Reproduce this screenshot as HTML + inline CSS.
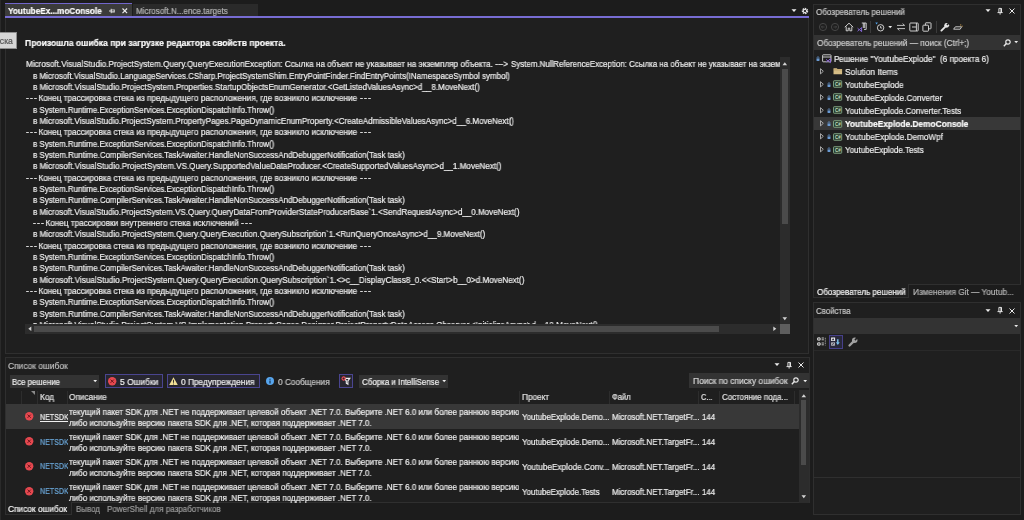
<!DOCTYPE html>
<html lang="ru">
<head>
<meta charset="utf-8">
<title>Visual Studio</title>
<style>
html,body{margin:0;padding:0;}
body{width:1024px;height:520px;overflow:hidden;background:#1c1c1c;position:relative;font-family:"Liberation Sans",sans-serif;}
.c{position:absolute;overflow:hidden;box-sizing:border-box;}
.t{position:absolute;white-space:pre;transform-origin:0 50%;will-change:transform;-webkit-text-stroke:0.2px currentColor;}
.r{position:absolute;display:block;box-sizing:border-box;}
.s{position:absolute;overflow:visible;}
</style>
</head>
<body>
<div class="c" id="edge" style="left:0.00px;top:0.00px;width:1.30px;height:520.00px;background:#2a2a2a;">
</div>
<div class="c" id="tabs" style="left:0.00px;top:0.00px;width:812.00px;height:19.00px;z-index:2;">
 <i class="r" style="left:5.00px;top:3.00px;width:127.00px;height:14.00px;background:#3b3b3b;border-top:1px solid #7166cc;"></i>
 <i class="r" style="left:133.00px;top:4.00px;width:125.00px;height:12.20px;background:#2a2a2a;"></i>
 <i class="r" style="left:5.00px;top:16.30px;width:804.00px;height:1.80px;background:#776cd2;"></i>
 <span id="t0" class="t" style="left:7.80px;top:6.90px;font-size:8.8px;line-height:8.8px;color:#ffffff;font-weight:bold;transform:scaleX(0.9320);">YoutubeEx...moConsole</span>
 <span id="t1" class="t" style="left:135.70px;top:6.90px;font-size:8.8px;line-height:8.8px;color:#b6b6b6;transform:scaleX(0.9159);">Microsoft.N...ence.targets</span>
 <svg class="s" style="left:108.00px;top:6.70px" width="8" height="8" viewBox="0 0 8 8"><path d="M1 4h2.2M3.2 1.8v4.4" fill="none" stroke="#e0e0e0" stroke-width="1"/><path d="M3.2 2.5h3.6v3H3.2z" fill="#d8d8d8"/><rect x="4.2" y="3.2" width="1.4" height="1.2" fill="#3b3b3b"/></svg>
 <svg class="s" style="left:122.40px;top:7.60px" width="5.6" height="5.6" viewBox="0 0 5.6 5.6"><path d="M0.5 0.5l4.6 4.6M5.1 0.5l-4.6 4.6" fill="none" stroke="#f0f0f0" stroke-width="1.1"/></svg>
 <svg class="s" style="left:791.30px;top:9.20px" width="6" height="4" viewBox="0 0 6 4"><path d="M0.5 0.2h5l-2.5 2.9z" fill="#ececec"/></svg>
 <svg class="s" style="left:801.00px;top:6.60px" width="8" height="8" viewBox="0 0 8 8"><circle cx="4" cy="4" r="2.3" fill="none" stroke="#e0e0e0" stroke-width="1.8" stroke-dasharray="1.3 0.6"/><circle cx="4" cy="4" r="1.6" fill="none" stroke="#e0e0e0" stroke-width="1"/></svg>
</div>
<div class="c" id="doc" style="left:5.00px;top:17.00px;width:804.00px;height:337.00px;background:#1f1f1f;box-shadow:inset 0 0 0 1px #2f2f2f;">
 <span id="t2" class="t" style="left:19.60px;top:22.09px;font-size:9px;line-height:9px;color:#ffffff;font-weight:bold;transform:scaleX(0.9515);">Произошла ошибка при загрузке редактора свойств проекта.</span>
 <div class="c" id="txt" style="left:20.00px;top:40.00px;width:755.00px;height:267.00px;">
  <span id="t3" class="t" style="left:485.50px;top:3.37px;font-size:8.6px;line-height:8.6px;color:#efefef;transform:scaleX(0.9224);"><span id="p3">System.NullReferenceException: Ссылка на объект не указывает на экзем</span>пляр объекта.</span>
  <span id="t4" class="t" style="left:1.20px;top:3.37px;font-size:8.6px;line-height:8.6px;color:#efefef;transform:scaleX(0.9453);">Microsoft.VisualStudio.ProjectSystem.Query.QueryExecutionException: Ссылка на объект не указывает на экземпляр объекта. ---&gt; </span>
  <span id="t5" class="t" style="left:8.20px;top:14.70px;font-size:8.6px;line-height:8.6px;color:#efefef;transform:scaleX(0.9250);">в Microsoft.VisualStudio.LanguageServices.CSharp.ProjectSystemShim.EntryPointFinder.FindEntryPoints(INamespaceSymbol symbol)</span>
  <span id="t6" class="t" style="left:8.20px;top:26.03px;font-size:8.6px;line-height:8.6px;color:#efefef;transform:scaleX(0.9402);">в Microsoft.VisualStudio.ProjectSystem.Properties.StartupObjectsEnumGenerator.&lt;GetListedValuesAsync&gt;d__8.MoveNext()</span>
  <span id="t7" class="t" style="left:0.90px;top:37.36px;font-size:8.6px;line-height:8.6px;color:#efefef;transform:scaleX(1.0264);letter-spacing:1px;">---</span>
  <span id="t8" class="t" style="left:11.20px;top:37.36px;font-size:8.6px;line-height:8.6px;color:#efefef;transform:scaleX(0.9542);"><span id="p8"> Конец трассировка стека из предыдущего расположения, где возникло исключение</span> </span>
  <span id="t9" class="t" style="left:335.10px;top:37.36px;font-size:8.6px;line-height:8.6px;color:#efefef;transform:scaleX(1.0350);letter-spacing:1px;">---</span>
  <span id="t10" class="t" style="left:8.20px;top:48.69px;font-size:8.6px;line-height:8.6px;color:#efefef;transform:scaleX(0.9176);">в System.Runtime.ExceptionServices.ExceptionDispatchInfo.Throw()</span>
  <span id="t11" class="t" style="left:8.20px;top:60.02px;font-size:8.6px;line-height:8.6px;color:#efefef;transform:scaleX(0.9363);">в Microsoft.VisualStudio.ProjectSystem.PropertyPages.PageDynamicEnumProperty.&lt;CreateAdmissibleValuesAsync&gt;d__6.MoveNext()</span>
  <span id="t12" class="t" style="left:0.90px;top:71.35px;font-size:8.6px;line-height:8.6px;color:#efefef;transform:scaleX(1.0264);letter-spacing:1px;">---</span>
  <span id="t13" class="t" style="left:11.20px;top:71.35px;font-size:8.6px;line-height:8.6px;color:#efefef;transform:scaleX(0.9542);"><span id="p13"> Конец трассировка стека из предыдущего расположения, где возникло исключение</span> </span>
  <span id="t14" class="t" style="left:335.10px;top:71.35px;font-size:8.6px;line-height:8.6px;color:#efefef;transform:scaleX(1.0350);letter-spacing:1px;">---</span>
  <span id="t15" class="t" style="left:8.20px;top:82.68px;font-size:8.6px;line-height:8.6px;color:#efefef;transform:scaleX(0.9176);">в System.Runtime.ExceptionServices.ExceptionDispatchInfo.Throw()</span>
  <span id="t16" class="t" style="left:8.20px;top:94.01px;font-size:8.6px;line-height:8.6px;color:#efefef;transform:scaleX(0.9231);">в System.Runtime.CompilerServices.TaskAwaiter.HandleNonSuccessAndDebuggerNotification(Task task)</span>
  <span id="t17" class="t" style="left:8.20px;top:105.34px;font-size:8.6px;line-height:8.6px;color:#efefef;transform:scaleX(0.9419);">в Microsoft.VisualStudio.ProjectSystem.VS.Query.SupportedValueDataProducer.&lt;CreateSupportedValuesAsync&gt;d__1.MoveNext()</span>
  <span id="t18" class="t" style="left:0.90px;top:116.67px;font-size:8.6px;line-height:8.6px;color:#efefef;transform:scaleX(1.0264);letter-spacing:1px;">---</span>
  <span id="t19" class="t" style="left:11.20px;top:116.67px;font-size:8.6px;line-height:8.6px;color:#efefef;transform:scaleX(0.9542);"><span id="p19"> Конец трассировка стека из предыдущего расположения, где возникло исключение</span> </span>
  <span id="t20" class="t" style="left:335.10px;top:116.67px;font-size:8.6px;line-height:8.6px;color:#efefef;transform:scaleX(1.0350);letter-spacing:1px;">---</span>
  <span id="t21" class="t" style="left:8.20px;top:128.00px;font-size:8.6px;line-height:8.6px;color:#efefef;transform:scaleX(0.9176);">в System.Runtime.ExceptionServices.ExceptionDispatchInfo.Throw()</span>
  <span id="t22" class="t" style="left:8.20px;top:139.33px;font-size:8.6px;line-height:8.6px;color:#efefef;transform:scaleX(0.9231);">в System.Runtime.CompilerServices.TaskAwaiter.HandleNonSuccessAndDebuggerNotification(Task task)</span>
  <span id="t23" class="t" style="left:8.20px;top:150.66px;font-size:8.6px;line-height:8.6px;color:#efefef;transform:scaleX(0.9345);">в Microsoft.VisualStudio.ProjectSystem.VS.Query.QueryDataFromProviderStateProducerBase`1.&lt;SendRequestAsync&gt;d__0.MoveNext()</span>
  <span id="t24" class="t" style="left:7.90px;top:161.99px;font-size:8.6px;line-height:8.6px;color:#efefef;transform:scaleX(1.0264);letter-spacing:1px;">---</span>
  <span id="t25" class="t" style="left:18.20px;top:161.99px;font-size:8.6px;line-height:8.6px;color:#efefef;transform:scaleX(0.9578);"><span id="p25"> Конец трассировки внутреннего стека исключений</span> </span>
  <span id="t26" class="t" style="left:216.30px;top:161.99px;font-size:8.6px;line-height:8.6px;color:#efefef;transform:scaleX(1.0350);letter-spacing:1px;">---</span>
  <span id="t27" class="t" style="left:8.20px;top:173.32px;font-size:8.6px;line-height:8.6px;color:#efefef;transform:scaleX(0.9414);">в Microsoft.VisualStudio.ProjectSystem.Query.QueryExecution.QuerySubscription`1.&lt;RunQueryOnceAsync&gt;d__9.MoveNext()</span>
  <span id="t28" class="t" style="left:0.90px;top:184.65px;font-size:8.6px;line-height:8.6px;color:#efefef;transform:scaleX(1.0264);letter-spacing:1px;">---</span>
  <span id="t29" class="t" style="left:11.20px;top:184.65px;font-size:8.6px;line-height:8.6px;color:#efefef;transform:scaleX(0.9542);"><span id="p29"> Конец трассировка стека из предыдущего расположения, где возникло исключение</span> </span>
  <span id="t30" class="t" style="left:335.10px;top:184.65px;font-size:8.6px;line-height:8.6px;color:#efefef;transform:scaleX(1.0350);letter-spacing:1px;">---</span>
  <span id="t31" class="t" style="left:8.20px;top:195.98px;font-size:8.6px;line-height:8.6px;color:#efefef;transform:scaleX(0.9176);">в System.Runtime.ExceptionServices.ExceptionDispatchInfo.Throw()</span>
  <span id="t32" class="t" style="left:8.20px;top:207.31px;font-size:8.6px;line-height:8.6px;color:#efefef;transform:scaleX(0.9231);">в System.Runtime.CompilerServices.TaskAwaiter.HandleNonSuccessAndDebuggerNotification(Task task)</span>
  <span id="t33" class="t" style="left:8.20px;top:218.64px;font-size:8.6px;line-height:8.6px;color:#efefef;transform:scaleX(0.9439);">в Microsoft.VisualStudio.ProjectSystem.Query.QueryExecution.QuerySubscription`1.&lt;&gt;c__DisplayClass8_0.&lt;&lt;Start&gt;b__0&gt;d.MoveNext()</span>
  <span id="t34" class="t" style="left:0.90px;top:229.97px;font-size:8.6px;line-height:8.6px;color:#efefef;transform:scaleX(1.0264);letter-spacing:1px;">---</span>
  <span id="t35" class="t" style="left:11.20px;top:229.97px;font-size:8.6px;line-height:8.6px;color:#efefef;transform:scaleX(0.9542);"><span id="p35"> Конец трассировка стека из предыдущего расположения, где возникло исключение</span> </span>
  <span id="t36" class="t" style="left:335.10px;top:229.97px;font-size:8.6px;line-height:8.6px;color:#efefef;transform:scaleX(1.0350);letter-spacing:1px;">---</span>
  <span id="t37" class="t" style="left:8.20px;top:241.30px;font-size:8.6px;line-height:8.6px;color:#efefef;transform:scaleX(0.9176);">в System.Runtime.ExceptionServices.ExceptionDispatchInfo.Throw()</span>
  <span id="t38" class="t" style="left:8.20px;top:252.63px;font-size:8.6px;line-height:8.6px;color:#efefef;transform:scaleX(0.9231);">в System.Runtime.CompilerServices.TaskAwaiter.HandleNonSuccessAndDebuggerNotification(Task task)</span>
  <span id="t39" class="t" style="left:8.20px;top:263.96px;font-size:8.6px;line-height:8.6px;color:#efefef;transform:scaleX(0.9375);">в Microsoft.VisualStudio.ProjectSystem.VS.Implementation.PropertyPages.Designer.ProjectPropertyDataAccess.Observer.&lt;InitializeAsync&gt;d__19.MoveNext()</span>
 </div>
 <i class="r" style="left:775.00px;top:40.00px;width:10.00px;height:267.00px;background:#2c2c2c;"></i>
 <i class="r" style="left:777.00px;top:51.80px;width:5.70px;height:155.00px;background:#4b4b4b;"></i>
 <svg class="s" style="left:777.20px;top:44.50px" width="5.6" height="3.6" viewBox="0 0 5.6 3.6"><path d="M0.5 3.3h4.6l-2.3-3z" fill="#d4d4d4"/></svg>
 <svg class="s" style="left:777.20px;top:300.20px" width="5.6" height="3.6" viewBox="0 0 5.6 3.6"><path d="M0.5 0.3h4.6l-2.3 3z" fill="#d4d4d4"/></svg>
 <i class="r" style="left:20.00px;top:307.00px;width:755.00px;height:10.00px;background:#2c2c2c;"></i>
 <i class="r" style="left:28.60px;top:309.00px;width:685.20px;height:6.00px;background:#4b4b4b;"></i>
 <svg class="s" style="left:23.00px;top:309.20px" width="3.6" height="5.6" viewBox="0 0 3.6 5.6"><path d="M3.3 0.5v4.6l-3-2.3z" fill="#d4d4d4"/></svg>
 <svg class="s" style="left:767.60px;top:309.20px" width="3.6" height="5.6" viewBox="0 0 3.6 5.6"><path d="M0.3 0.5v4.6l3-2.3z" fill="#d4d4d4"/></svg>
 <i class="r" style="left:775.00px;top:307.00px;width:10.00px;height:10.00px;background:#5e5e5e;"></i>
</div>
<div class="c" id="tip" style="left:0.00px;top:32.00px;width:17.00px;height:16.50px;background:#d6d6d6;box-shadow:inset -1px 0 0 0 #8e8e8e,inset 0 1px 0 0 #8e8e8e,inset 0 -1px 0 0 #8e8e8e;">
 <span id="t40" class="t" style="left:-9.50px;top:4.91px;font-size:8.6px;line-height:8.6px;color:#555555;">пуска</span>
</div>
<div class="c" id="err" style="left:5.00px;top:357.00px;width:804.50px;height:146.00px;background:#1f1f1f;box-shadow:inset 0 0 0 1px #2f2f2f;">
 <span id="t41" class="t" style="left:2.80px;top:5.11px;font-size:8.6px;line-height:8.6px;color:#bebebe;transform:scaleX(0.9783);">Список ошибок</span>
 <svg class="s" style="left:768.60px;top:6.30px" width="6" height="4" viewBox="0 0 6 4"><path d="M0.5 0.2h5l-2.5 2.9z" fill="#ececec"/></svg>
 <svg class="s" style="left:781.00px;top:4.00px" width="6" height="8" viewBox="0 0 6 8"><path d="M1.9 5.4V1.4h2.2v4M0.5 5.6h5.2M3.1 5.6v2" fill="none" stroke="#f2f2f2" stroke-width="0.9"/><path d="M4.3 1.2v4.2" stroke="#f2f2f2" stroke-width="1.1"/></svg>
 <svg class="s" style="left:792.60px;top:5.00px" width="6" height="6" viewBox="0 0 6 6"><path d="M0.5 0.5l5 5M5.5 0.5l-5 5" fill="none" stroke="#e8e8e8" stroke-width="1"/></svg>
 <i class="r" style="left:4.80px;top:18.00px;width:88.80px;height:12.80px;background:#333333;"></i>
 <span id="t42" class="t" style="left:7.10px;top:20.81px;font-size:8.6px;line-height:8.6px;color:#efefef;transform:scaleX(0.9078);">Все решение</span>
 <svg class="s" style="left:88.00px;top:23.00px" width="4.4" height="3" viewBox="0 0 4.4 3"><path d="M0.3 0h3.8l-1.9 2.3z" fill="#ececec"/></svg>
 <i class="r" style="left:100.00px;top:17.10px;width:57.90px;height:13.60px;background:#272630;border:1px solid #4a4590;"></i>
 <svg class="s" style="left:102.80px;top:20.00px" width="8.4" height="8.4" viewBox="0 0 8.4 8.4"><circle cx="4.2" cy="4.2" r="4.2" fill="#e5484f"/><path d="M2.6 2.6l3.2 3.2M5.8 2.6l-3.2 3.2" stroke="#6e141c" stroke-width="1" fill="none"/></svg>
 <span id="t43" class="t" style="left:114.50px;top:20.81px;font-size:8.6px;line-height:8.6px;color:#f0f0f0;transform:scaleX(0.9813);">5 Ошибки</span>
 <i class="r" style="left:162.20px;top:17.10px;width:92.80px;height:13.60px;background:#272630;border:1px solid #4a4590;"></i>
 <svg class="s" style="left:164.00px;top:20.00px" width="9" height="8.4" viewBox="0 0 9 8.4"><path d="M4.5 0.3L8.8 8.1H0.2z" fill="#f2e096"/><path d="M4.5 2.8v3M4.5 6.6v0.9" stroke="#222" stroke-width="0.9" fill="none"/></svg>
 <span id="t44" class="t" style="left:175.60px;top:20.81px;font-size:8.6px;line-height:8.6px;color:#f0f0f0;transform:scaleX(0.9672);">0 Предупреждения</span>
 <svg class="s" style="left:261.30px;top:19.50px" width="8" height="8" viewBox="0 0 8 8"><circle cx="4" cy="4" r="4" fill="#58a6ee"/><path d="M4 1.7v1.1M4 3.5v2.9" stroke="#0c2744" stroke-width="1.1" fill="none"/></svg>
 <span id="t45" class="t" style="left:273.00px;top:20.81px;font-size:8.6px;line-height:8.6px;color:#c8c8c8;transform:scaleX(0.9607);">0 Сообщения</span>
 <i class="r" style="left:334.10px;top:17.10px;width:13.70px;height:13.60px;background:#272630;border:1px solid #4a4590;"></i>
 <svg class="s" style="left:336.40px;top:19.30px" width="10" height="10" viewBox="0 0 10 10"><path d="M3.4 2.4h5.4l-1.9 2.4v3.4l-1.6-0.9v-2.5z" fill="none" stroke="#f0f0f0" stroke-width="1.1"/><circle cx="2.6" cy="2.5" r="1.6" fill="#272630" stroke="#ee4c55" stroke-width="1.1"/></svg>
 <i class="r" style="left:353.80px;top:18.00px;width:89.60px;height:12.80px;background:#333333;"></i>
 <span id="t46" class="t" style="left:356.90px;top:20.81px;font-size:8.6px;line-height:8.6px;color:#efefef;transform:scaleX(0.9242);">Сборка и IntelliSense</span>
 <svg class="s" style="left:436.60px;top:23.00px" width="4.4" height="3" viewBox="0 0 4.4 3"><path d="M0.3 0h3.8l-1.9 2.3z" fill="#ececec"/></svg>
 <i class="r" style="left:684.00px;top:16.40px;width:119.80px;height:14.60px;background:#333333;"></i>
 <span id="t47" class="t" style="left:687.80px;top:20.31px;font-size:8.6px;line-height:8.6px;color:#d6d6d6;transform:scaleX(0.9809);">Поиск по списку ошибок</span>
 <svg class="s" style="left:786.00px;top:19.50px" width="8" height="8" viewBox="0 0 8 8"><circle cx="5" cy="3" r="2.2" fill="none" stroke="#e8e8e8" stroke-width="1.2"/><path d="M3.4 4.6L0.8 7.2" stroke="#e8e8e8" stroke-width="1.4"/></svg>
 <svg class="s" style="left:797.50px;top:22.60px" width="4.4" height="3" viewBox="0 0 4.4 3"><path d="M0.3 0h3.8l-1.9 2.3z" fill="#ececec"/></svg>
 <i class="r" style="left:16.00px;top:33.50px;width:1.00px;height:13.00px;background:#2d2d2d;"></i>
 <i class="r" style="left:32.00px;top:33.50px;width:1.00px;height:13.00px;background:#2d2d2d;"></i>
 <i class="r" style="left:62.40px;top:33.50px;width:1.00px;height:13.00px;background:#2d2d2d;"></i>
 <i class="r" style="left:514.40px;top:33.50px;width:1.00px;height:13.00px;background:#2d2d2d;"></i>
 <i class="r" style="left:604.40px;top:33.50px;width:1.00px;height:13.00px;background:#2d2d2d;"></i>
 <i class="r" style="left:693.40px;top:33.50px;width:1.00px;height:13.00px;background:#2d2d2d;"></i>
 <i class="r" style="left:713.80px;top:33.50px;width:1.00px;height:13.00px;background:#2d2d2d;"></i>
 <i class="r" style="left:788.80px;top:33.50px;width:1.00px;height:13.00px;background:#2d2d2d;"></i>
 <svg class="s" style="left:26.00px;top:33.80px" width="4" height="4" viewBox="0 0 4 4"><path d="M0 0h4v4z" fill="#8a8a8a"/></svg>
 <span id="t48" class="t" style="left:34.60px;top:36.31px;font-size:8.6px;line-height:8.6px;color:#e2e2e2;transform:scaleX(0.9641);">Код</span>
 <span id="t49" class="t" style="left:64.00px;top:36.31px;font-size:8.6px;line-height:8.6px;color:#e2e2e2;transform:scaleX(0.9558);">Описание</span>
 <span id="t50" class="t" style="left:516.90px;top:36.31px;font-size:8.6px;line-height:8.6px;color:#e2e2e2;transform:scaleX(0.9572);">Проект</span>
 <span id="t51" class="t" style="left:606.60px;top:36.31px;font-size:8.6px;line-height:8.6px;color:#e2e2e2;transform:scaleX(0.8846);">Файл</span>
 <span id="t52" class="t" style="left:696.00px;top:36.31px;font-size:8.6px;line-height:8.6px;color:#e2e2e2;transform:scaleX(0.8598);">С...</span>
 <span id="t53" class="t" style="left:716.90px;top:36.31px;font-size:8.6px;line-height:8.6px;color:#e2e2e2;transform:scaleX(0.9247);">Состояние пода...</span>
 <i class="r" style="left:1.00px;top:46.50px;width:793.20px;height:25.40px;background:#383838;"></i>
 <div class="c" id="code" style="left:33.00px;top:46.50px;width:30.30px;height:99.00px;">
  <span id="t54" class="t" style="left:1.60px;top:9.11px;font-size:8.6px;line-height:8.6px;color:#f0f0f0;transform:scaleX(0.8204);text-decoration:underline;"><span id="p54">NETSDK</span>1045</span>
  <span id="t60" class="t" style="left:1.60px;top:34.04px;font-size:8.6px;line-height:8.6px;color:#6aa6d8;transform:scaleX(0.8204);"><span id="p60">NETSDK</span>1045</span>
  <span id="t66" class="t" style="left:1.60px;top:58.97px;font-size:8.6px;line-height:8.6px;color:#6aa6d8;transform:scaleX(0.8204);"><span id="p66">NETSDK</span>1045</span>
  <span id="t72" class="t" style="left:1.60px;top:83.90px;font-size:8.6px;line-height:8.6px;color:#6aa6d8;transform:scaleX(0.8204);"><span id="p72">NETSDK</span>1045</span>
 </div>
 <div class="c" id="desc" style="left:63.00px;top:46.50px;width:451.40px;height:99.00px;">
  <span id="t55" class="t" style="left:1.30px;top:4.31px;font-size:8.6px;line-height:8.6px;color:#efefef;transform:scaleX(0.9387);">текущий пакет SDK для .NET не поддерживает целевой объект .NET 7.0. Выберите .NET 6.0 или более раннюю версию</span>
  <span id="t56" class="t" style="left:1.30px;top:15.46px;font-size:8.6px;line-height:8.6px;color:#efefef;transform:scaleX(0.9333);">либо используйте версию пакета SDK для .NET, которая поддерживает .NET 7.0.</span>
  <span id="t61" class="t" style="left:1.30px;top:29.24px;font-size:8.6px;line-height:8.6px;color:#efefef;transform:scaleX(0.9387);">текущий пакет SDK для .NET не поддерживает целевой объект .NET 7.0. Выберите .NET 6.0 или более раннюю версию</span>
  <span id="t62" class="t" style="left:1.30px;top:40.39px;font-size:8.6px;line-height:8.6px;color:#efefef;transform:scaleX(0.9333);">либо используйте версию пакета SDK для .NET, которая поддерживает .NET 7.0.</span>
  <span id="t67" class="t" style="left:1.30px;top:54.17px;font-size:8.6px;line-height:8.6px;color:#efefef;transform:scaleX(0.9387);">текущий пакет SDK для .NET не поддерживает целевой объект .NET 7.0. Выберите .NET 6.0 или более раннюю версию</span>
  <span id="t68" class="t" style="left:1.30px;top:65.32px;font-size:8.6px;line-height:8.6px;color:#efefef;transform:scaleX(0.9333);">либо используйте версию пакета SDK для .NET, которая поддерживает .NET 7.0.</span>
  <span id="t73" class="t" style="left:1.30px;top:79.10px;font-size:8.6px;line-height:8.6px;color:#efefef;transform:scaleX(0.9387);">текущий пакет SDK для .NET не поддерживает целевой объект .NET 7.0. Выберите .NET 6.0 или более раннюю версию</span>
  <span id="t74" class="t" style="left:1.30px;top:90.25px;font-size:8.6px;line-height:8.6px;color:#efefef;transform:scaleX(0.9333);">либо используйте версию пакета SDK для .NET, которая поддерживает .NET 7.0.</span>
 </div>
 <svg class="s" style="left:20.30px;top:55.00px" width="8.4" height="8.4" viewBox="0 0 8.4 8.4"><circle cx="4.2" cy="4.2" r="4.2" fill="#e5484f"/><path d="M2.6 2.6l3.2 3.2M5.8 2.6l-3.2 3.2" stroke="#6e141c" stroke-width="1" fill="none"/></svg>
 <span id="t57" class="t" style="left:516.90px;top:56.21px;font-size:8.6px;line-height:8.6px;color:#efefef;transform:scaleX(0.9233);">YoutubeExplode.Demo...</span>
 <span id="t58" class="t" style="left:606.60px;top:56.21px;font-size:8.6px;line-height:8.6px;color:#efefef;transform:scaleX(0.9243);">Microsoft.NET.TargetFr...</span>
 <span id="t59" class="t" style="left:696.60px;top:56.21px;font-size:8.6px;line-height:8.6px;color:#efefef;transform:scaleX(0.9133);">144</span>
 <svg class="s" style="left:20.30px;top:79.93px" width="8.4" height="8.4" viewBox="0 0 8.4 8.4"><circle cx="4.2" cy="4.2" r="4.2" fill="#e5484f"/><path d="M2.6 2.6l3.2 3.2M5.8 2.6l-3.2 3.2" stroke="#6e141c" stroke-width="1" fill="none"/></svg>
 <span id="t63" class="t" style="left:516.90px;top:81.14px;font-size:8.6px;line-height:8.6px;color:#efefef;transform:scaleX(0.9233);">YoutubeExplode.Demo...</span>
 <span id="t64" class="t" style="left:606.60px;top:81.14px;font-size:8.6px;line-height:8.6px;color:#efefef;transform:scaleX(0.9243);">Microsoft.NET.TargetFr...</span>
 <span id="t65" class="t" style="left:696.60px;top:81.14px;font-size:8.6px;line-height:8.6px;color:#efefef;transform:scaleX(0.9133);">144</span>
 <svg class="s" style="left:20.30px;top:104.86px" width="8.4" height="8.4" viewBox="0 0 8.4 8.4"><circle cx="4.2" cy="4.2" r="4.2" fill="#e5484f"/><path d="M2.6 2.6l3.2 3.2M5.8 2.6l-3.2 3.2" stroke="#6e141c" stroke-width="1" fill="none"/></svg>
 <span id="t69" class="t" style="left:516.90px;top:106.07px;font-size:8.6px;line-height:8.6px;color:#efefef;transform:scaleX(0.9587);">YoutubeExplode.Conv...</span>
 <span id="t70" class="t" style="left:606.60px;top:106.07px;font-size:8.6px;line-height:8.6px;color:#efefef;transform:scaleX(0.9243);">Microsoft.NET.TargetFr...</span>
 <span id="t71" class="t" style="left:696.60px;top:106.07px;font-size:8.6px;line-height:8.6px;color:#efefef;transform:scaleX(0.9133);">144</span>
 <svg class="s" style="left:20.30px;top:129.79px" width="8.4" height="8.4" viewBox="0 0 8.4 8.4"><circle cx="4.2" cy="4.2" r="4.2" fill="#e5484f"/><path d="M2.6 2.6l3.2 3.2M5.8 2.6l-3.2 3.2" stroke="#6e141c" stroke-width="1" fill="none"/></svg>
 <span id="t75" class="t" style="left:516.90px;top:131.00px;font-size:8.6px;line-height:8.6px;color:#efefef;transform:scaleX(0.9158);">YoutubeExplode.Tests</span>
 <span id="t76" class="t" style="left:606.60px;top:131.00px;font-size:8.6px;line-height:8.6px;color:#efefef;transform:scaleX(0.9243);">Microsoft.NET.TargetFr...</span>
 <span id="t77" class="t" style="left:696.60px;top:131.00px;font-size:8.6px;line-height:8.6px;color:#efefef;transform:scaleX(0.9133);">144</span>
 <i class="r" style="left:794.00px;top:33.00px;width:9.60px;height:112.50px;background:#2c2c2c;"></i>
 <i class="r" style="left:796.00px;top:43.00px;width:5.40px;height:65.00px;background:#4b4b4b;"></i>
 <svg class="s" style="left:796.20px;top:37.20px" width="5.6" height="3.6" viewBox="0 0 5.6 3.6"><path d="M0.5 3.3h4.6l-2.3-3z" fill="#d4d4d4"/></svg>
 <svg class="s" style="left:796.20px;top:137.80px" width="5.6" height="3.6" viewBox="0 0 5.6 3.6"><path d="M0.5 0.3h4.6l-2.3 3z" fill="#d4d4d4"/></svg>
</div>
<div class="c" id="errtabs" style="left:5.00px;top:502.00px;width:804.50px;height:13.50px;">
 <i class="r" style="left:0.00px;top:0.00px;width:66.50px;height:12.80px;background:#1f1f1f;border:1px solid #2f2f2f;border-top:none;"></i>
 <span id="t78" class="t" style="left:3.40px;top:3.31px;font-size:8.6px;line-height:8.6px;color:#f4f4f4;transform:scaleX(0.9668);">Список ошибок</span>
 <span id="t79" class="t" style="left:70.70px;top:3.31px;font-size:8.6px;line-height:8.6px;color:#9b9b9b;transform:scaleX(0.9159);">Вывод</span>
 <span id="t80" class="t" style="left:101.70px;top:3.31px;font-size:8.6px;line-height:8.6px;color:#9b9b9b;transform:scaleX(0.9333);">PowerShell для разработчиков</span>
</div>
<div class="c" id="sol" style="left:813.00px;top:3.50px;width:207.50px;height:281.40px;background:#1f1f1f;box-shadow:inset 0 0 0 1px #2f2f2f;">
 <span id="t81" class="t" style="left:3.00px;top:4.41px;font-size:8.6px;line-height:8.6px;color:#c8c8c8;transform:scaleX(0.9404);">Обозреватель решений</span>
 <svg class="s" style="left:171.50px;top:5.50px" width="6" height="4" viewBox="0 0 6 4"><path d="M0.5 0.2h5l-2.5 2.9z" fill="#ececec"/></svg>
 <svg class="s" style="left:183.60px;top:3.50px" width="6" height="8" viewBox="0 0 6 8"><path d="M1.9 5.4V1.4h2.2v4M0.5 5.6h5.2M3.1 5.6v2" fill="none" stroke="#f2f2f2" stroke-width="0.9"/><path d="M4.3 1.2v4.2" stroke="#f2f2f2" stroke-width="1.1"/></svg>
 <svg class="s" style="left:196.00px;top:4.20px" width="6" height="6" viewBox="0 0 6 6"><path d="M0.5 0.5l5 5M5.5 0.5l-5 5" fill="none" stroke="#e8e8e8" stroke-width="1"/></svg>
 <svg class="s" style="left:4.50px;top:18.50px" width="10" height="10" viewBox="0 0 10 10"><circle cx="5" cy="5" r="3.6" fill="none" stroke="#4a4a4a" stroke-width="0.9"/><path d="M6.6 5H3.4M4.6 3.8L3.4 5l1.2 1.2" fill="none" stroke="#4a4a4a" stroke-width="0.8"/></svg>
 <svg class="s" style="left:17.00px;top:18.50px" width="10" height="10" viewBox="0 0 10 10"><circle cx="5" cy="5" r="3.6" fill="none" stroke="#4a4a4a" stroke-width="0.9"/><path d="M3.4 5h3.2M5.4 3.8L6.6 5 5.4 6.2" fill="none" stroke="#4a4a4a" stroke-width="0.8"/></svg>
 <svg class="s" style="left:30.70px;top:18.50px" width="10" height="10" viewBox="0 0 10 10"><path d="M0.8 5.2L5 1.2l4.2 4M2.2 4.6v4.2h2v-2.6h1.6v2.6h2V4.6" fill="none" stroke="#e0e0e0" stroke-width="0.9"/></svg>
 <svg class="s" style="left:44.00px;top:18.50px" width="10" height="10" viewBox="0 0 10 10"><path d="M4.8 1h4.4v6.4H7M6.3 1v5M7.7 1v5" fill="none" stroke="#d8d8d8" stroke-width="0.9"/><path d="M0.6 6.2l1.6 1.5-1.6 1.5M4.6 5.6v4l-2.2-2z" fill="none" stroke="#8f6fe8" stroke-width="0.9"/></svg>
 <i class="r" style="left:57.40px;top:17.50px;width:1.00px;height:12.00px;background:#3a3a3a;"></i>
 <svg class="s" style="left:62.00px;top:18.50px" width="10" height="10" viewBox="0 0 10 10"><circle cx="5.6" cy="5.8" r="3.2" fill="none" stroke="#e0e0e0" stroke-width="0.9"/><path d="M5.6 4v2h1.6" fill="none" stroke="#e0e0e0" stroke-width="0.8"/><path d="M0.3 0.6h2.6l-1.3 1.8z" fill="#4ea0e8"/></svg>
 <svg class="s" style="left:74.80px;top:22.50px" width="4.4" height="3" viewBox="0 0 4.4 3"><path d="M0.3 0h3.8l-1.9 2.3z" fill="#ececec"/></svg>
 <svg class="s" style="left:82.60px;top:18.50px" width="10" height="10" viewBox="0 0 10 10"><path d="M1 3.4h7.6M6.6 1.6l2 1.8M9 6.6H1.4M3.4 8.4l-2-1.8" fill="none" stroke="#d0d0d0" stroke-width="0.9"/></svg>
 <svg class="s" style="left:96.00px;top:18.50px" width="10" height="10" viewBox="0 0 10 10"><rect x="0.8" y="1" width="8.4" height="8" rx="0.8" fill="none" stroke="#e0e0e0" stroke-width="0.9"/><path d="M3 5h4M7.4 1v8" fill="none" stroke="#e0e0e0" stroke-width="0.9"/></svg>
 <svg class="s" style="left:108.60px;top:18.50px" width="10" height="10" viewBox="0 0 10 10"><rect x="3.4" y="0.8" width="5.6" height="6" rx="0.6" fill="none" stroke="#e0e0e0" stroke-width="0.9"/><rect x="0.9" y="3.2" width="5.6" height="6" rx="0.6" fill="#1f1f1f" stroke="#e0e0e0" stroke-width="0.9"/></svg>
 <i class="r" style="left:122.50px;top:17.50px;width:1.00px;height:12.00px;background:#3a3a3a;"></i>
 <svg class="s" style="left:126.70px;top:18.50px" width="10" height="10" viewBox="0 0 10 10"><path d="M1.4 8.6L5.4 4.6" stroke="#e6e6e6" stroke-width="1.9" stroke-linecap="round"/><circle cx="6.7" cy="3.3" r="2.4" fill="#e6e6e6"/><path d="M6.9 3.1l2.6-2.6" stroke="#1f1f1f" stroke-width="1.4"/></svg>
 <svg class="s" style="left:139.90px;top:18.50px" width="10" height="10" viewBox="0 0 10 10"><path d="M0.6 7.2h6.6l1.4-2.4H2.4z" fill="none" stroke="#d8d8d8" stroke-width="0.9"/><path d="M7 3.2l1.2-0.6M8.6 4.2h1.2" stroke="#d8a54a" stroke-width="0.8"/></svg>
 <i class="r" style="left:1.00px;top:31.30px;width:205.50px;height:14.80px;background:#333333;"></i>
 <span id="t82" class="t" style="left:4.00px;top:35.81px;font-size:8.6px;line-height:8.6px;color:#cccccc;transform:scaleX(0.9561);">Обозреватель решений — поиск (Ctrl+;)</span>
 <svg class="s" style="left:189.50px;top:35.50px" width="8" height="8" viewBox="0 0 8 8"><circle cx="5" cy="3" r="2.2" fill="none" stroke="#e8e8e8" stroke-width="1.2"/><path d="M3.4 4.6L0.8 7.2" stroke="#e8e8e8" stroke-width="1.4"/></svg>
 <svg class="s" style="left:200.60px;top:37.90px" width="4.4" height="3" viewBox="0 0 4.4 3"><path d="M0.3 0h3.8l-1.9 2.3z" fill="#ececec"/></svg>
 <i class="r" style="left:1.00px;top:113.70px;width:205.50px;height:12.60px;background:#383838;"></i>
 <svg class="s" style="left:3.00px;top:52.70px" width="4" height="5.4" viewBox="0 0 4 5.4"><rect x="0.5" y="2.4" width="3" height="2.6" rx="0.4" fill="#6a9ad2"/><path d="M1.1 2.6V1.6a0.9 0.9 0 0 1 1.8 0v1" fill="none" stroke="#6a9ad2" stroke-width="0.7"/></svg>
 <svg class="s" style="left:9.00px;top:50.90px" width="10" height="9" viewBox="0 0 10 9"><rect x="0.6" y="0.8" width="8.4" height="7" rx="0.6" fill="none" stroke="#d8d8d8" stroke-width="0.9"/><path d="M0.6 3h8.4" stroke="#d8d8d8" stroke-width="0.9"/><path d="M4.2 5.4l1.5 1.3-1.5 1.3M8.4 4.8v3.8l-2.2-1.9z" fill="#1f1f1f" stroke="#9a6ff0" stroke-width="0.9"/></svg>
 <span id="t83" class="t" style="left:21.10px;top:51.36px;font-size:8.6px;line-height:8.6px;color:#efefef;transform:scaleX(0.9490);">Решение "YoutubeExplode"  (6 проекта 6)</span>
 <svg class="s" style="left:6.90px;top:64.50px" width="4" height="7" viewBox="0 0 4 7"><path d="M0.5 0.7v5.2l2.8-2.6z" fill="none" stroke="#c8c8c8" stroke-width="0.8"/></svg>
 <svg class="s" style="left:19.60px;top:63.50px" width="9.6" height="8" viewBox="0 0 9.6 8"><path d="M0.5 1.2h3.2l0.9 0.9h4.5v5.2H0.5z" fill="#d6bd85"/><path d="M0.5 2.9h8.6" stroke="#a88c55" stroke-width="0.6"/></svg>
 <span id="t84" class="t" style="left:31.60px;top:64.41px;font-size:8.6px;line-height:8.6px;color:#efefef;transform:scaleX(0.9675);">Solution Items</span>
 <svg class="s" style="left:6.90px;top:77.55px" width="4" height="7" viewBox="0 0 4 7"><path d="M0.5 0.7v5.2l2.8-2.6z" fill="none" stroke="#c8c8c8" stroke-width="0.8"/></svg>
 <svg class="s" style="left:14.00px;top:78.15px" width="4" height="5.4" viewBox="0 0 4 5.4"><rect x="0.5" y="2.4" width="3" height="2.6" rx="0.4" fill="#6a9ad2"/><path d="M1.1 2.6V1.6a0.9 0.9 0 0 1 1.8 0v1" fill="none" stroke="#6a9ad2" stroke-width="0.7"/></svg>
 <svg class="s" style="left:19.80px;top:76.85px" width="9.6" height="8.4" viewBox="0 0 9.6 8.4"><rect x="0.5" y="0.7" width="8.2" height="6.6" rx="0.7" fill="#2a3a2d" stroke="#86aa88" stroke-width="0.9"/><text x="1.9" y="5.8" font-size="4.5" font-weight="bold" fill="#c4e2c0" font-family="Liberation Sans, sans-serif">C#</text></svg>
 <span id="t85" class="t" style="left:31.60px;top:77.46px;font-size:8.6px;line-height:8.6px;color:#efefef;transform:scaleX(0.9407);">YoutubeExplode</span>
 <svg class="s" style="left:6.90px;top:90.60px" width="4" height="7" viewBox="0 0 4 7"><path d="M0.5 0.7v5.2l2.8-2.6z" fill="none" stroke="#c8c8c8" stroke-width="0.8"/></svg>
 <svg class="s" style="left:14.00px;top:91.20px" width="4" height="5.4" viewBox="0 0 4 5.4"><rect x="0.5" y="2.4" width="3" height="2.6" rx="0.4" fill="#6a9ad2"/><path d="M1.1 2.6V1.6a0.9 0.9 0 0 1 1.8 0v1" fill="none" stroke="#6a9ad2" stroke-width="0.7"/></svg>
 <svg class="s" style="left:19.80px;top:89.90px" width="9.6" height="8.4" viewBox="0 0 9.6 8.4"><rect x="0.5" y="0.7" width="8.2" height="6.6" rx="0.7" fill="#2a3a2d" stroke="#86aa88" stroke-width="0.9"/><text x="1.9" y="5.8" font-size="4.5" font-weight="bold" fill="#c4e2c0" font-family="Liberation Sans, sans-serif">C#</text></svg>
 <span id="t86" class="t" style="left:31.60px;top:90.51px;font-size:8.6px;line-height:8.6px;color:#efefef;transform:scaleX(0.9492);">YoutubeExplode.Converter</span>
 <svg class="s" style="left:6.90px;top:103.65px" width="4" height="7" viewBox="0 0 4 7"><path d="M0.5 0.7v5.2l2.8-2.6z" fill="none" stroke="#c8c8c8" stroke-width="0.8"/></svg>
 <svg class="s" style="left:14.00px;top:104.25px" width="4" height="5.4" viewBox="0 0 4 5.4"><rect x="0.5" y="2.4" width="3" height="2.6" rx="0.4" fill="#6a9ad2"/><path d="M1.1 2.6V1.6a0.9 0.9 0 0 1 1.8 0v1" fill="none" stroke="#6a9ad2" stroke-width="0.7"/></svg>
 <svg class="s" style="left:19.80px;top:102.95px" width="9.6" height="8.4" viewBox="0 0 9.6 8.4"><rect x="0.5" y="0.7" width="8.2" height="6.6" rx="0.7" fill="#2a3a2d" stroke="#86aa88" stroke-width="0.9"/><text x="1.9" y="5.8" font-size="4.5" font-weight="bold" fill="#c4e2c0" font-family="Liberation Sans, sans-serif">C#</text></svg>
 <span id="t87" class="t" style="left:31.60px;top:103.56px;font-size:8.6px;line-height:8.6px;color:#efefef;transform:scaleX(0.9343);">YoutubeExplode.Converter.Tests</span>
 <svg class="s" style="left:6.90px;top:116.70px" width="4" height="7" viewBox="0 0 4 7"><path d="M0.5 0.7v5.2l2.8-2.6z" fill="none" stroke="#c8c8c8" stroke-width="0.8"/></svg>
 <svg class="s" style="left:14.00px;top:117.30px" width="4" height="5.4" viewBox="0 0 4 5.4"><rect x="0.5" y="2.4" width="3" height="2.6" rx="0.4" fill="#6a9ad2"/><path d="M1.1 2.6V1.6a0.9 0.9 0 0 1 1.8 0v1" fill="none" stroke="#6a9ad2" stroke-width="0.7"/></svg>
 <svg class="s" style="left:19.80px;top:116.00px" width="9.6" height="8.4" viewBox="0 0 9.6 8.4"><rect x="0.5" y="0.7" width="8.2" height="6.6" rx="0.7" fill="#2a3a2d" stroke="#86aa88" stroke-width="0.9"/><text x="1.9" y="5.8" font-size="4.5" font-weight="bold" fill="#c4e2c0" font-family="Liberation Sans, sans-serif">C#</text></svg>
 <span id="t88" class="t" style="left:31.60px;top:116.61px;font-size:8.6px;line-height:8.6px;color:#ffffff;font-weight:bold;transform:scaleX(0.9691);">YoutubeExplode.DemoConsole</span>
 <svg class="s" style="left:6.90px;top:129.75px" width="4" height="7" viewBox="0 0 4 7"><path d="M0.5 0.7v5.2l2.8-2.6z" fill="none" stroke="#c8c8c8" stroke-width="0.8"/></svg>
 <svg class="s" style="left:14.00px;top:130.35px" width="4" height="5.4" viewBox="0 0 4 5.4"><rect x="0.5" y="2.4" width="3" height="2.6" rx="0.4" fill="#6a9ad2"/><path d="M1.1 2.6V1.6a0.9 0.9 0 0 1 1.8 0v1" fill="none" stroke="#6a9ad2" stroke-width="0.7"/></svg>
 <svg class="s" style="left:19.80px;top:129.05px" width="9.6" height="8.4" viewBox="0 0 9.6 8.4"><rect x="0.5" y="0.7" width="8.2" height="6.6" rx="0.7" fill="#2a3a2d" stroke="#86aa88" stroke-width="0.9"/><text x="1.9" y="5.8" font-size="4.5" font-weight="bold" fill="#c4e2c0" font-family="Liberation Sans, sans-serif">C#</text></svg>
 <span id="t89" class="t" style="left:31.60px;top:129.66px;font-size:8.6px;line-height:8.6px;color:#efefef;transform:scaleX(0.9526);">YoutubeExplode.DemoWpf</span>
 <svg class="s" style="left:6.90px;top:142.80px" width="4" height="7" viewBox="0 0 4 7"><path d="M0.5 0.7v5.2l2.8-2.6z" fill="none" stroke="#c8c8c8" stroke-width="0.8"/></svg>
 <svg class="s" style="left:14.00px;top:143.40px" width="4" height="5.4" viewBox="0 0 4 5.4"><rect x="0.5" y="2.4" width="3" height="2.6" rx="0.4" fill="#6a9ad2"/><path d="M1.1 2.6V1.6a0.9 0.9 0 0 1 1.8 0v1" fill="none" stroke="#6a9ad2" stroke-width="0.7"/></svg>
 <svg class="s" style="left:19.80px;top:142.10px" width="9.6" height="8.4" viewBox="0 0 9.6 8.4"><rect x="0.5" y="0.7" width="8.2" height="6.6" rx="0.7" fill="#2a3a2d" stroke="#86aa88" stroke-width="0.9"/><text x="1.9" y="5.8" font-size="4.5" font-weight="bold" fill="#c4e2c0" font-family="Liberation Sans, sans-serif">C#</text></svg>
 <span id="t90" class="t" style="left:31.60px;top:142.71px;font-size:8.6px;line-height:8.6px;color:#efefef;transform:scaleX(0.9288);">YoutubeExplode.Tests</span>
</div>
<div class="c" id="soltabs" style="left:813.00px;top:284.00px;width:207.50px;height:15.00px;">
 <i class="r" style="left:0.00px;top:0.00px;width:95.60px;height:14.30px;background:#1f1f1f;border:1px solid #2f2f2f;border-top:none;"></i>
 <span id="t91" class="t" style="left:3.80px;top:4.21px;font-size:8.6px;line-height:8.6px;color:#f4f4f4;transform:scaleX(0.9393);">Обозреватель решений</span>
 <span id="t92" class="t" style="left:100.00px;top:4.21px;font-size:8.6px;line-height:8.6px;color:#b4b4b4;transform:scaleX(0.9643);">Изменения Git — Youtub...</span>
</div>
<div class="c" id="prop" style="left:813.00px;top:302.40px;width:207.50px;height:213.00px;background:#1f1f1f;box-shadow:inset 0 0 0 1px #2f2f2f;">
 <span id="t93" class="t" style="left:2.80px;top:4.81px;font-size:8.6px;line-height:8.6px;color:#c8c8c8;transform:scaleX(0.9139);">Свойства</span>
 <svg class="s" style="left:171.50px;top:6.60px" width="6" height="4" viewBox="0 0 6 4"><path d="M0.5 0.2h5l-2.5 2.9z" fill="#ececec"/></svg>
 <svg class="s" style="left:183.50px;top:4.10px" width="6" height="8" viewBox="0 0 6 8"><path d="M1.9 5.4V1.4h2.2v4M0.5 5.6h5.2M3.1 5.6v2" fill="none" stroke="#f2f2f2" stroke-width="0.9"/><path d="M4.3 1.2v4.2" stroke="#f2f2f2" stroke-width="1.1"/></svg>
 <svg class="s" style="left:195.80px;top:5.20px" width="6" height="6" viewBox="0 0 6 6"><path d="M0.5 0.5l5 5M5.5 0.5l-5 5" fill="none" stroke="#e8e8e8" stroke-width="1"/></svg>
 <i class="r" style="left:1.00px;top:15.80px;width:205.50px;height:15.60px;background:#333333;"></i>
 <svg class="s" style="left:200.80px;top:22.40px" width="4.4" height="3" viewBox="0 0 4.4 3"><path d="M0.3 0h3.8l-1.9 2.3z" fill="#ececec"/></svg>
 <svg class="s" style="left:4.00px;top:35.00px" width="9" height="9" viewBox="0 0 9 9"><path d="M0.7 0.9h2.4v2.2H0.7zM0.7 5.9h2.4v2.2H0.7z" fill="none" stroke="#e0e0e0" stroke-width="1"/><path d="M4.6 1h2.3M4.6 2.8h2.3M4.6 6h2.3M4.6 7.8h2.3" fill="none" stroke="#d0d0d0" stroke-width="0.9"/><path d="M8.3 0.8v7.6" stroke="#d0d0d0" stroke-width="0.8" stroke-dasharray="1 0.8"/></svg>
 <i class="r" style="left:15.80px;top:32.50px;width:14.70px;height:13.80px;background:#29283a;border:1px solid #46408a;"></i>
 <svg class="s" style="left:18.40px;top:35.00px" width="9" height="9" viewBox="0 0 9 9"><rect x="0.1" y="0.5" width="4" height="3.5" fill="#ececec"/><path d="M2.1 1.1l1.2 2.2h-2.4z" fill="#25233a"/><rect x="0.3" y="5.4" width="3.4" height="3.3" fill="#ececec"/><path d="M0.9 6.1h2.1l-2.1 1.8h2.3" stroke="#25233a" stroke-width="0.6" fill="none"/><path d="M6.8 2.2v3.6" stroke="#7cc4f0" stroke-width="1.4"/><path d="M4.9 5.2h3.8l-1.9 2.7z" fill="#7cc4f0"/></svg>
 <svg class="s" style="left:35.00px;top:34.60px" width="10" height="10" viewBox="0 0 10 10"><path d="M1.5 8.5L5.4 4.6" stroke="#a2a2a2" stroke-width="2.3" stroke-linecap="round"/><circle cx="6.7" cy="3.3" r="2.7" fill="#a2a2a2"/><path d="M6.9 3.1l2.7-2.7" stroke="#1f1f1f" stroke-width="1.5"/></svg>
 <i class="r" style="left:1.00px;top:47.20px;width:205.50px;height:1.00px;background:#292929;"></i>
 <i class="r" style="left:1.00px;top:174.80px;width:205.50px;height:1.00px;background:#2f2f2f;"></i>
</div>
</body>
</html>
